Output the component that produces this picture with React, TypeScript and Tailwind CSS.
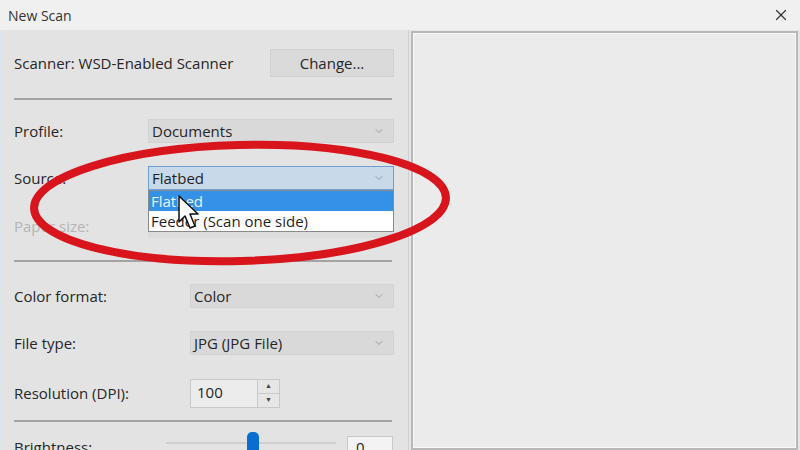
import React from 'react';
import { ChevronDown, X } from 'lucide-react';

const font = { fontFamily: '"Open Sans", "Noto Sans", sans-serif' };

const Select = ({ value, className = '' }: { value: string; className?: string }) => (
  <div className={`flex items-center justify-between h-[24px] bg-[#d9d9d9] border border-[#d2d2d2] pl-[3px] pr-[8px] ${className}`}>
    <span className="text-[15px] text-[#262626] leading-none">{value}</span>
    <ChevronDown className="w-[12px] h-[12px] text-[#8a8a8a]" strokeWidth={1.5} />
  </div>
);

const Separator = () => <div className="h-[2px] bg-[#a3a3a3] mr-[2px]" />;

const App = () => {
  return (
    <div className="w-[800px] h-[450px] overflow-hidden flex flex-col bg-[#efefef] relative" style={font}>
      {/* Title bar */}
      <div className="h-[30px] shrink-0 flex items-center justify-between pl-[8px] pr-[10px] bg-[#f0f0f0]">
        <span className="text-[14px] text-[#333]">New Scan</span>
        <X className="w-[18px] h-[18px] text-[#333]" strokeWidth={1.6} />
      </div>

      <div className="flex flex-1 min-h-0 border-l-2 border-[#dbe7ec]">
        {/* Settings panel */}
        <div className="w-[407px] shrink-0 bg-[#e3e3e3] pl-[12px] pr-[14px] border-r border-[#cfcfcf]">
          <div className="flex items-center justify-between mt-[19px] h-[28px]">
            <span className="text-[15px] text-[#262626]">Scanner: WSD-Enabled Scanner</span>
            <div className="w-[124px] h-[28px] bg-[#dadada] border border-[#d0d0d0] flex items-center justify-center text-[15px] text-[#262626]">
              Change...
            </div>
          </div>

          <div className="mt-[21px]"><Separator /></div>

          <div className="flex items-center mt-[19px]">
            <span className="w-[134px] text-[15px] text-[#262626]">Profile:</span>
            <Select value="Documents" className="flex-1" />
          </div>

          <div className="flex items-center mt-[23px] relative">
            <span className="w-[134px] text-[15px] text-[#262626]">Source:</span>
            <div className="flex-1 flex items-center justify-between h-[24px] bg-[#c8d9ea] border border-[#6d9fd4] pl-[3px] pr-[8px]">
              <span className="text-[15px] text-[#1f1f1f] leading-none">Flatbed</span>
              <ChevronDown className="w-[12px] h-[12px] text-[#7a8a9a]" strokeWidth={1.5} />
            </div>
            {/* dropdown list */}
            <div className="absolute left-[134px] right-0 top-[24px] bg-white border border-[#8a8a8a] z-10">
              <div className="h-[20px] bg-[#3491e6] text-[#e9f2fb] text-[15px] leading-[20px] pl-[2px]">Flatbed</div>
              <div className="h-[20px] text-[#1f1f1f] text-[15px] leading-[20px] pl-[2px]">Feeder (Scan one side)</div>
            </div>
          </div>

          <div className="flex items-center mt-[24px]">
            <span className="w-[134px] text-[15px] text-[#b5b5b5]">Paper size:</span>
            <div className="flex-1 h-[24px] bg-[#dcdcdc]" />
          </div>

          <div className="mt-[22px]"><Separator /></div>

          <div className="flex items-center mt-[22px]">
            <span className="w-[176px] text-[15px] text-[#262626]">Color format:</span>
            <Select value="Color" className="flex-1" />
          </div>

          <div className="flex items-center mt-[23px]">
            <span className="w-[176px] text-[15px] text-[#262626]">File type:</span>
            <Select value="JPG (JPG File)" className="flex-1" />
          </div>

          <div className="flex items-center mt-[24px]">
            <span className="w-[176px] text-[15px] text-[#262626]">Resolution (DPI):</span>
            <div className="flex h-[29px]">
              <div className="w-[68px] bg-[#ececec] border border-[#c9c9c9] text-[15px] text-[#262626] pl-[6px] leading-[24px]">100</div>
              <div className="w-[22px] flex flex-col border border-l-0 border-[#c9c9c9] bg-[#e6e6e6]">
                <div className="flex-1 flex items-center justify-center border-b border-[#c9c9c9] text-[7px] text-[#444]">▲</div>
                <div className="flex-1 flex items-center justify-center text-[7px] text-[#444]">▼</div>
              </div>
            </div>
          </div>

          <div className="mt-[12px]"><Separator /></div>

          <div className="flex items-start mt-[8px] relative">
            <span className="w-[152px] text-[15px] text-[#262626] mt-[6px]">Brightness:</span>
            <div className="relative w-[170px] h-[20px]">
              <div className="absolute left-0 right-0 top-[12px] h-[2px] bg-[#cfcfcf]" />
              <div className="absolute left-[81px] top-[2px] w-[12px] h-[18px] bg-[#0a6ed1] rounded-t-[5px]" />
            </div>
            <div className="ml-[11px] mt-[6px] w-[46px] h-[24px] bg-[#f3f3f3] border border-[#c9c9c9] text-[15px] pl-[8px] leading-[20px] text-[#262626]">0</div>
          </div>
        </div>

        {/* Preview panel */}
        <div className="flex-1 bg-[#e6e6e6] pl-[2px] pr-[2px] pt-[1px]">
          <div className="h-full border-2 border-[#b8b8b8] bg-[#ebebeb]">
            <div className="h-full border border-[#f7f7f7]" />
          </div>
        </div>
      </div>

      {/* Highlight ellipse and cursor */}
      <svg className="absolute left-0 top-0 pointer-events-none z-20" width="800" height="450">
        <ellipse cx="240" cy="203" rx="206" ry="58" transform="rotate(-1.5 240 203)" fill="none" stroke="#d8141c" strokeWidth="8" />
        <path d="M179 196 L179 222 L185 216 L190 228 L195 226 L190 214 L198 214 Z" fill="#fff" stroke="#111" strokeWidth="1.5" strokeLinejoin="round" />
      </svg>
    </div>
  );
};

export default App;
